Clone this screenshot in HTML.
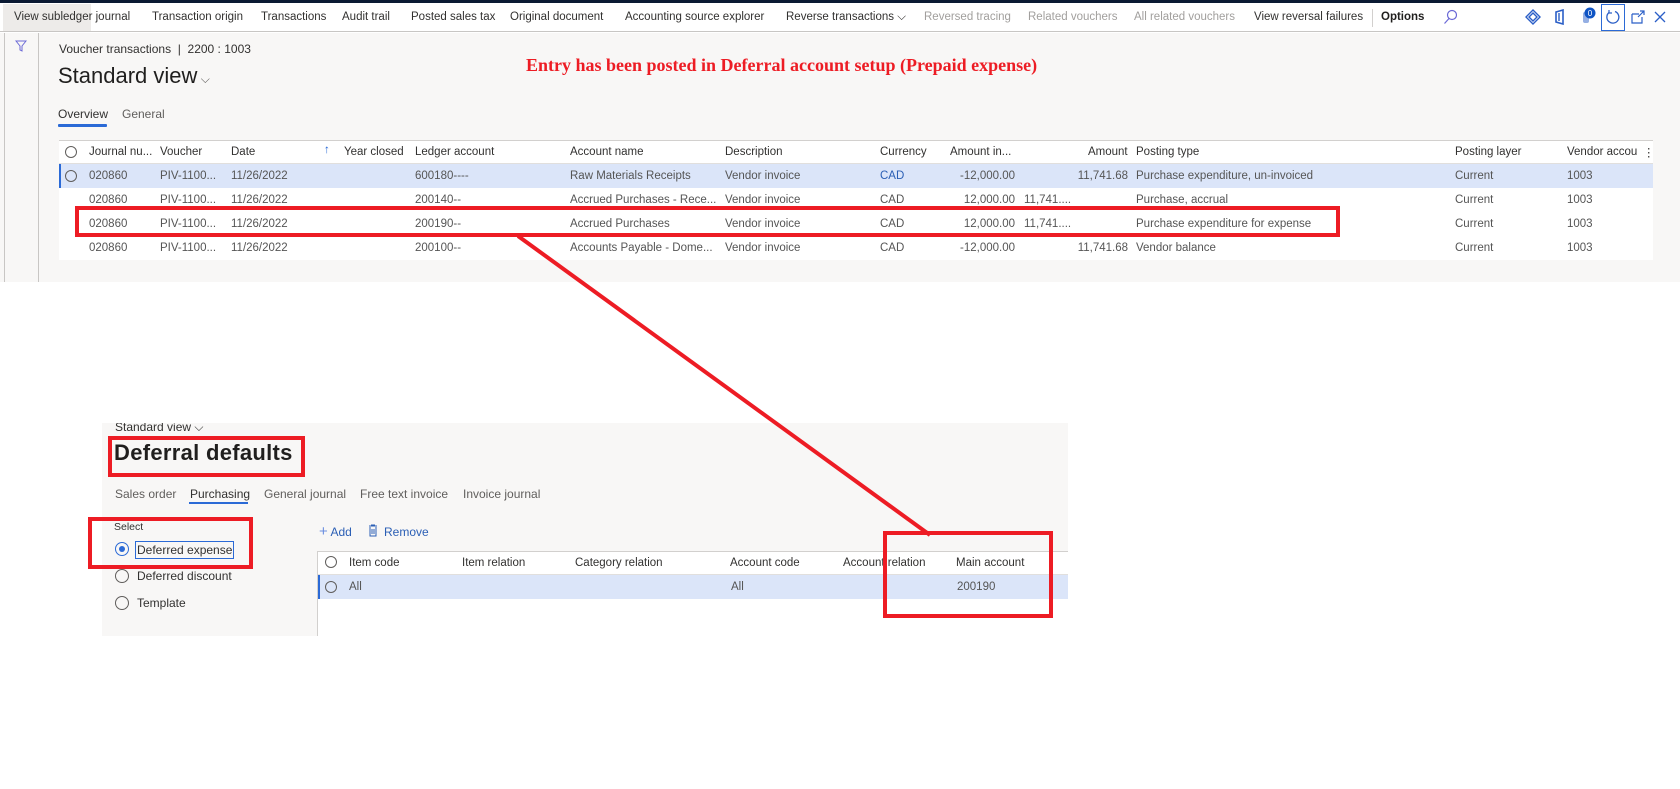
<!DOCTYPE html>
<html><head><meta charset="utf-8"><style>
*{margin:0;padding:0;box-sizing:border-box}
body{width:1680px;height:789px;position:relative;background:#fff;font-family:"Liberation Sans",sans-serif;color:#323130;overflow:hidden}
.a{position:absolute;white-space:nowrap}
.t{font-size:11.5px;top:11px}
.dis{color:#a19f9d}
.h{font-size:11.5px;color:#323130}
.c{font-size:11.5px;color:#555}
.rad{position:absolute;width:12px;height:12px;border:1px solid #605e5c;border-radius:50%}
.rb{position:absolute;border:4px solid #ed1c24}
</style></head><body>
<div class="a" style="left:0;top:0;width:1680px;height:3px;background:#0b1a33"></div>
<div class="a" style="left:0;top:3px;width:1680px;height:29px;background:#fff;border-bottom:1px solid #c8c6c4"></div>
<div class="a" style="left:3px;top:4px;width:88px;height:27px;background:#edebe9"></div>
<div class="a t" style="left:14px">View subledger journal</div>
<div class="a t" style="left:152px">Transaction origin</div>
<div class="a t" style="left:261px">Transactions</div>
<div class="a t" style="left:342px">Audit trail</div>
<div class="a t" style="left:411px">Posted sales tax</div>
<div class="a t" style="left:510px">Original document</div>
<div class="a t" style="left:625px">Accounting source explorer</div>
<div class="a t" style="left:786px">Reverse transactions ⌵</div>
<div class="a t dis" style="left:924px">Reversed tracing</div>
<div class="a t dis" style="left:1028px">Related vouchers</div>
<div class="a t dis" style="left:1134px">All related vouchers</div>
<div class="a t" style="left:1254px">View reversal failures</div>
<div class="a" style="left:1372px;top:9px;width:1px;height:18px;background:#d2d0ce"></div>
<div class="a t" style="left:1381px;font-weight:bold;color:#201f1e">Options</div>
<svg class="a" style="left:1443px;top:9px" width="14" height="16"><circle cx="9" cy="6" r="4.5" fill="none" stroke="#6b69d6" stroke-width="1.2"/><line x1="6" y1="9.5" x2="1.5" y2="14.5" stroke="#6b69d6" stroke-width="1.2"/></svg>
<svg class="a" style="left:1525px;top:9px" width="16" height="16"><path d="M8 1 L15 8 L8 15 L1 8Z M8 4 L12 8 L8 12 L4 8Z" fill="none" stroke="#2b5fc7" stroke-width="1.4"/></svg>
<svg class="a" style="left:1554px;top:9px" width="12" height="16"><path d="M2 3 L9 1 L9 15 L2 13Z" fill="none" stroke="#2b5fc7" stroke-width="1.6"/><path d="M5 4v8" stroke="#2b5fc7" stroke-width="1.4"/></svg>
<svg class="a" style="left:1582px;top:7px" width="14" height="18"><rect x="1" y="5" width="6" height="11" rx="2" fill="#2b5fc7" opacity=".5"/><circle cx="8" cy="6" r="5.5" fill="#0f54c4"/><text x="8" y="9" font-size="8" fill="#fff" text-anchor="middle" font-family="Liberation Sans">0</text></svg>
<div class="a" style="left:1601px;top:4px;width:24px;height:27px;border:1px solid #2b6ad6"></div>
<svg class="a" style="left:1605px;top:9px" width="16" height="16"><path d="M10 2.5 A6 6 0 1 1 4 3.5" fill="none" stroke="#2b5fc7" stroke-width="1.3"/><path d="M4 1v3h3" fill="none" stroke="#2b5fc7" stroke-width="1.2"/></svg>
<svg class="a" style="left:1631px;top:10px" width="14" height="14"><path d="M1 4h7M1 4v9h10V7M9 1h4v4M13 1L7 7" fill="none" stroke="#2b5fc7" stroke-width="1.2"/></svg>
<svg class="a" style="left:1653px;top:10px" width="14" height="14"><path d="M2 2L12 12M12 2L2 12" stroke="#2b5fc7" stroke-width="1.3"/></svg>

<div class="a" style="left:0;top:33px;width:1680px;height:249px;background:#f8f7f6"></div>
<div class="a" style="left:4px;top:33px;width:1px;height:249px;background:#c8c6c4"></div>
<div class="a" style="left:38px;top:33px;width:1px;height:249px;background:#c8c6c4"></div>
<svg class="a" style="left:15px;top:40px" width="12" height="12"><path d="M1 1h10L7 6v5L5 10V6Z" fill="none" stroke="#6b69d6" stroke-width="1"/></svg>
<div class="a" style="left:59px;top:42px;font-size:12px">Voucher transactions &nbsp;|&nbsp; 2200 : 1003</div>
<div class="a" style="left:58px;top:63px;font-size:22px;color:#201f1e">Standard view<span style="font-size:12px;color:#605e5c"> ⌵</span></div>
<div class="a" style="left:526px;top:55px;font-family:'Liberation Serif',serif;font-weight:bold;font-size:18px;color:#ed1c24">Entry has been posted in Deferral account setup (Prepaid expense)</div>
<div class="a" style="left:58px;top:107px;font-size:12px">Overview</div>
<div class="a" style="left:58px;top:124px;width:49px;height:3px;background:#2b6ad6;border-radius:1px"></div>
<div class="a" style="left:122px;top:107px;font-size:12px;color:#605e5c">General</div>

<div class="a" style="left:59px;top:140px;width:1594px;height:120px;background:#fff;border-top:1px solid #d2d0ce"></div>
<div class="a" style="left:59px;top:163px;width:1594px;height:1px;background:#e1dfdd"></div>
<div class="rad" style="left:65px;top:146px"></div>
<div class="a h" style="left:89px;top:146px">Journal nu...</div>
<div class="a h" style="left:160px;top:146px">Voucher</div>
<div class="a h" style="left:231px;top:146px">Date</div>
<div class="a h" style="left:324px;top:144px;color:#2b6ad6">↑</div>
<div class="a h" style="left:344px;top:146px">Year closed</div>
<div class="a h" style="left:415px;top:146px">Ledger account</div>
<div class="a h" style="left:570px;top:146px">Account name</div>
<div class="a h" style="left:725px;top:146px">Description</div>
<div class="a h" style="left:880px;top:146px">Currency</div>
<div class="a h" style="left:950px;top:146px">Amount in...</div>
<div class="a h" style="left:1088px;top:146px">Amount</div>
<div class="a h" style="left:1136px;top:146px">Posting type</div>
<div class="a h" style="left:1455px;top:146px">Posting layer</div>
<div class="a h" style="left:1567px;top:146px">Vendor accou</div>
<div class="a h" style="left:1643px;top:145px">⋮</div>

<div class="a" style="left:59px;top:164px;width:1594px;height:24px;background:#dbe5f9"></div>
<div class="a" style="left:59px;top:164px;width:2px;height:24px;background:#2b6ad6"></div>
<div class="rad" style="left:65px;top:170px"></div>
<div class="a c" style="left:89px;top:164px;line-height:24px">020860<br>020860<br>020860<br>020860</div>
<div class="a c" style="left:160px;top:164px;line-height:24px">PIV-1100...<br>PIV-1100...<br>PIV-1100...<br>PIV-1100...</div>
<div class="a c" style="left:231px;top:164px;line-height:24px">11/26/2022<br>11/26/2022<br>11/26/2022<br>11/26/2022</div>
<div class="a c" style="left:415px;top:164px;line-height:24px">600180----<br>200140--<br>200190--<br>200100--</div>
<div class="a c" style="left:570px;top:164px;line-height:24px">Raw Materials Receipts<br>Accrued Purchases - Rece...<br>Accrued Purchases<br>Accounts Payable - Dome...</div>
<div class="a c" style="left:725px;top:164px;line-height:24px">Vendor invoice<br>Vendor invoice<br>Vendor invoice<br>Vendor invoice</div>
<div class="a c" style="left:880px;top:164px;line-height:24px"><span style="color:#2b5fb5">CAD</span><br>CAD<br>CAD<br>CAD</div>
<div class="a c" style="left:935px;top:164px;width:80px;text-align:right;line-height:24px">-12,000.00<br>12,000.00<br>12,000.00<br>-12,000.00</div>
<div class="a c" style="left:1024px;top:164px;line-height:24px"><br>11,741....<br>11,741....</div>
<div class="a c" style="left:1048px;top:164px;width:80px;text-align:right;line-height:24px">11,741.68<br><br><br>11,741.68</div>
<div class="a c" style="left:1136px;top:164px;line-height:24px">Purchase expenditure, un-invoiced<br>Purchase, accrual<br>Purchase expenditure for expense<br>Vendor balance</div>
<div class="a c" style="left:1455px;top:164px;line-height:24px">Current<br>Current<br>Current<br>Current</div>
<div class="a c" style="left:1567px;top:164px;line-height:24px">1003<br>1003<br>1003<br>1003</div>

<div class="a" style="left:102px;top:423px;width:966px;height:213px;background:#f8f7f6;overflow:hidden">
  <div class="a" style="left:13px;top:-3px;font-size:12px;color:#323130">Standard view ⌵</div>
</div>
<div class="a" style="left:114px;top:440px;font-size:22px;font-weight:bold;color:#201f1e;letter-spacing:.3px">Deferral defaults</div>
<div class="a" style="left:115px;top:487px;font-size:12px;color:#605e5c">Sales order</div>
<div class="a" style="left:190px;top:487px;font-size:12px;color:#323130">Purchasing</div>
<div class="a" style="left:189px;top:502px;width:59px;height:2px;background:#2b6ad6"></div>
<div class="a" style="left:264px;top:487px;font-size:12px;color:#605e5c">General journal</div>
<div class="a" style="left:360px;top:487px;font-size:12px;color:#605e5c">Free text invoice</div>
<div class="a" style="left:463px;top:487px;font-size:12px;color:#605e5c">Invoice journal</div>
<div class="a" style="left:114px;top:521px;font-size:10.5px;color:#323130">Select</div>
<div class="a" style="left:115px;top:542px;width:14px;height:14px;border:1px solid #2b6ad6;border-radius:50%"></div>
<div class="a" style="left:119px;top:546px;width:6px;height:6px;background:#2b6ad6;border-radius:50%"></div>
<div class="a" style="left:135px;top:541px;border:1px solid #2b6ad6;padding:1px 1px;font-size:12px">Deferred expense</div>
<div class="a" style="left:115px;top:569px;width:14px;height:14px;border:1px solid #605e5c;border-radius:50%"></div>
<div class="a" style="left:137px;top:569px;font-size:12px">Deferred discount</div>
<div class="a" style="left:115px;top:596px;width:14px;height:14px;border:1px solid #605e5c;border-radius:50%"></div>
<div class="a" style="left:137px;top:596px;font-size:12px">Template</div>
<div class="a" style="left:317px;top:551px;width:1px;height:85px;background:#d2d0ce"></div>
<div class="a" style="left:319px;top:523px;font-size:12px;color:#2b5fb5"><span style="font-size:15px;color:#6b8fe0">+</span> Add</div>
<svg class="a" style="left:368px;top:524px" width="10" height="13"><path d="M1 2h8M3.5 2V1h3v1M2 3v9h6V3M4 5v5M6 5v5" fill="none" stroke="#2b5fb5" stroke-width="1"/></svg>
<div class="a" style="left:384px;top:525px;font-size:12px;color:#2b5fb5">Remove</div>
<div class="a" style="left:318px;top:551px;width:750px;height:85px;background:#fff;border-top:1px solid #d2d0ce"></div>
<div class="a" style="left:318px;top:574px;width:750px;height:1px;background:#e1dfdd"></div>
<div class="rad" style="left:325px;top:556px"></div>
<div class="a h" style="left:349px;top:557px">Item code</div>
<div class="a h" style="left:462px;top:557px">Item relation</div>
<div class="a h" style="left:575px;top:557px">Category relation</div>
<div class="a h" style="left:730px;top:557px">Account code</div>
<div class="a h" style="left:843px;top:557px">Account relation</div>
<div class="a h" style="left:956px;top:557px">Main account</div>
<div class="a" style="left:318px;top:575px;width:750px;height:24px;background:#dbe5f9"></div>
<div class="a" style="left:318px;top:575px;width:2px;height:24px;background:#2b6ad6"></div>
<div class="rad" style="left:325px;top:581px"></div>
<div class="a c" style="left:349px;top:581px">All</div>
<div class="a c" style="left:731px;top:581px">All</div>
<div class="a c" style="left:957px;top:581px">200190</div>

<div class="rb" style="left:75px;top:206px;width:1265px;height:31px"></div>
<div class="rb" style="left:108px;top:436px;width:197px;height:41px"></div>
<div class="rb" style="left:88px;top:517px;width:165px;height:52px"></div>
<div class="rb" style="left:883px;top:531px;width:170px;height:87px"></div>
<svg class="a" style="left:0;top:0" width="1680" height="789"><line x1="518" y1="236" x2="930" y2="535" stroke="#ed1c24" stroke-width="4"/></svg>
</body></html>
